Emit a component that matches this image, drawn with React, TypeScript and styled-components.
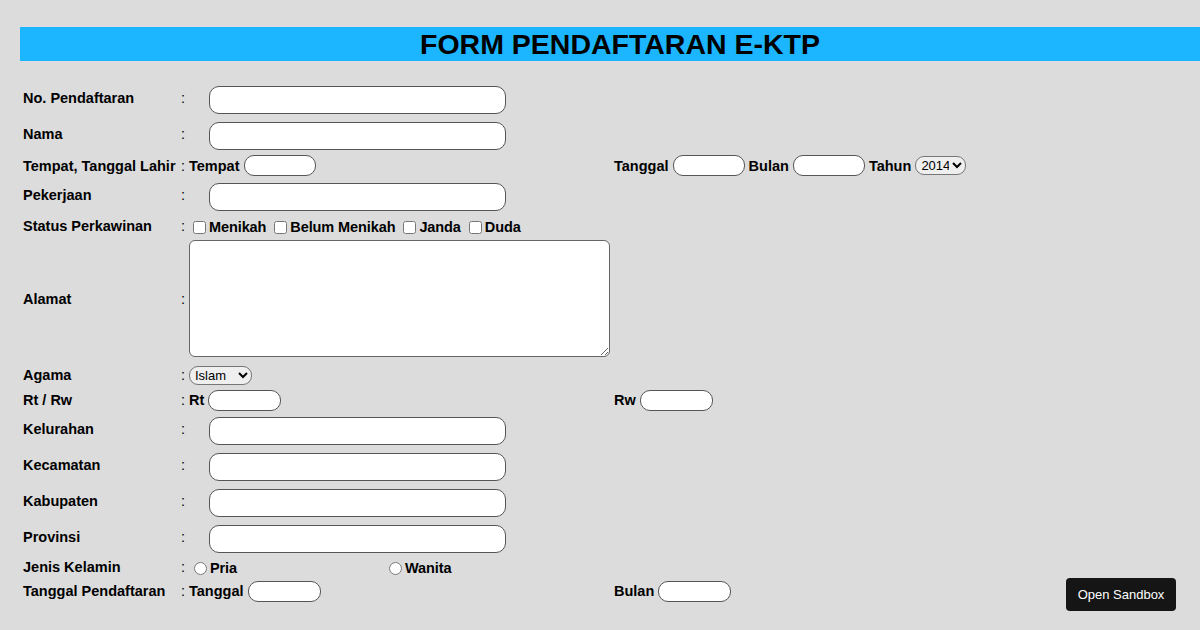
import React from 'react';
import styled, { createGlobalStyle } from 'styled-components';

const Global = createGlobalStyle`
  html, body { margin: 0; padding: 0; background: #dcdcdc; overflow: hidden; }
  body { font-family: "Liberation Sans", Arial, sans-serif; color: #000; }
`;

const Page = styled.div`
  padding: 27px 0 0 20px;
`;

const TitleBar = styled.h1`
  margin: 0;
  height: 34px;
  line-height: 34px;
  background: #1bb6ff;
  padding-left: 20px;
  text-align: center;
  font-size: 28.5px;
  font-weight: bold;
`;

const Form = styled.div`
  display: flex;
  flex-direction: column;
  padding: 21px 0 0 3px;
`;

const Row = styled.div<{ $h: number }>`
  display: flex;
  align-items: center;
  height: ${p => p.$h}px;
  font-size: 14.5px;
  font-weight: bold;
`;

const Label = styled.div<{ $up?: boolean }>`
  width: 158px;
  flex: none;
  padding-bottom: ${p => (p.$up ? 4 : 0)}px;
`;

const Cell = styled.div<{ $w?: number }>`
  display: flex;
  align-items: center;
  flex: none;
  width: ${p => (p.$w ? p.$w + 'px' : 'auto')};
  white-space: pre;
`;

const Colon = styled.span<{ $up?: boolean }>`
  display: inline-block;
  width: 8px;
  font-weight: normal;
  padding-bottom: ${p => (p.$up ? 4 : 0)}px;
`;

const Field = styled.input<{ $w: number; $h: number; $ml?: number }>`
  box-sizing: border-box;
  width: ${p => p.$w}px;
  height: ${p => p.$h}px;
  margin: 0 0 0 ${p => p.$ml ?? 0}px;
  padding: 1px 6px;
  border: 1px solid #555;
  border-radius: 10px;
  background: #fff;
  outline: none;
`;

const Area = styled.textarea`
  box-sizing: border-box;
  width: 421px;
  height: 117px;
  margin: 0;
  border: 1px solid #666;
  border-radius: 6px;
  background: #fff;
`;

const Select = styled.select<{ $w: number }>`
  box-sizing: border-box;
  width: ${p => p.$w}px;
  height: 19px;
  margin: 0;
  padding: 0 0 0 1px;
  border: 1px solid #767676;
  border-radius: 9px;
  background: #efefef;
  font-family: "Liberation Sans", Arial, sans-serif;
  font-size: 13px;
  color: #000;
`;

const Check = styled.input`
  width: 13px;
  height: 13px;
  margin: 0 3px 0 4px;
`;

const Radio = styled.input`
  width: 13px;
  height: 13px;
  margin: 2px 3px 0 5px;
`;

const Opt = styled.label`
  display: flex;
  align-items: center;
  margin-right: 4px;
  padding-top: 2px;
  letter-spacing: -0.1px;
`;

const Sandbox = styled.button`
  position: fixed;
  right: 24px;
  bottom: 19px;
  width: 110px;
  height: 33px;
  border: none;
  border-radius: 4px;
  background: #151515;
  color: #fff;
  font-family: "Liberation Sans", Arial, sans-serif;
  font-size: 13px;
`;

const Wide = ({ label, h }: { label: string; h: number }) => (
  <Row $h={h}>
    <Label $up>{label}</Label>
    <Cell>
      <Colon $up>:</Colon>
      <Field $w={297} $h={28} $ml={20} />
    </Cell>
  </Row>
);

const Small = ({ w = 72 }: { w?: number }) => <Field $w={w} $h={21} />;

const status = ['Menikah', 'Belum Menikah', 'Janda', 'Duda'];

export default function App() {
  return (
    <Page>
      <Global />
      <TitleBar>FORM PENDAFTARAN E-KTP</TitleBar>
      <Form>
        <Wide label="No. Pendaftaran" h={36} />
        <Wide label="Nama" h={36} />
        <Row $h={23}>
          <Label>Tempat, Tanggal Lahir</Label>
          <Cell $w={433}>
            <Colon>:</Colon>Tempat <Small />
          </Cell>
          <Cell>
            Tanggal <Small /> Bulan <Small /> Tahun{' '}
            <Select $w={51} defaultValue="2014">
              <option>2014</option>
              <option>2015</option>
            </Select>
          </Cell>
        </Row>
        <Wide label="Pekerjaan" h={40} />
        <Row $h={18}>
          <Label>Status Perkawinan</Label>
          <Cell>
            <Colon>:</Colon>
            {status.map(s => (
              <Opt key={s}>
                <Check type="checkbox" />
                {s}
              </Opt>
            ))}
          </Cell>
        </Row>
        <Row $h={127}>
          <Label>Alamat</Label>
          <Cell>
            <Colon>:</Colon>
            <Area />
          </Cell>
        </Row>
        <Row $h={26}>
          <Label>Agama</Label>
          <Cell>
            <Colon>:</Colon>
            <Select $w={63} defaultValue="Islam">
              <option>Islam</option>
              <option>Kristen</option>
              <option>Hindu</option>
              <option>Budha</option>
            </Select>
          </Cell>
        </Row>
        <Row $h={24}>
          <Label>Rt / Rw</Label>
          <Cell $w={433}>
            <Colon>:</Colon>Rt <Small w={73} />
          </Cell>
          <Cell>
            Rw <Small w={73} />
          </Cell>
        </Row>
        <Wide label="Kelurahan" h={37} />
        <Wide label="Kecamatan" h={36} />
        <Wide label="Kabupaten" h={36} />
        <Wide label="Provinsi" h={36} />
        <Row $h={19}>
          <Label>Jenis Kelamin</Label>
          <Cell $w={203}>
            <Colon>:</Colon>
            <Opt>
              <Radio type="radio" name="jk" />
              Pria
            </Opt>
          </Cell>
          <Cell>
            <Opt>
              <Radio type="radio" name="jk" />
              Wanita
            </Opt>
          </Cell>
        </Row>
        <Row $h={30}>
          <Label>Tanggal Pendaftaran</Label>
          <Cell $w={433}>
            <Colon>:</Colon>Tanggal <Small w={73} />
          </Cell>
          <Cell>
            Bulan <Small w={73} />
          </Cell>
        </Row>
      </Form>
      <Sandbox>Open Sandbox</Sandbox>
    </Page>
  );
}
